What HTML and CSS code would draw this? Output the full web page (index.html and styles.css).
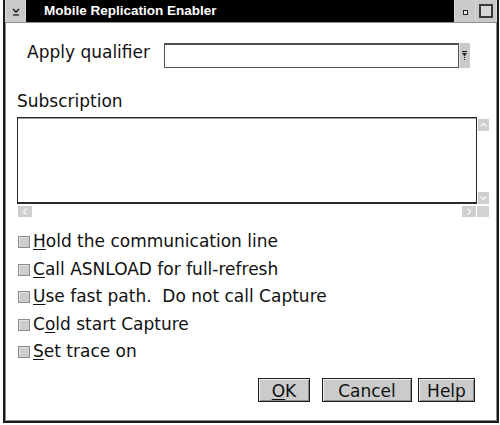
FILE: index.html
```html
<!DOCTYPE html>
<html>
<head>
<meta charset="utf-8">
<link rel="stylesheet" href="styles.css">
</head>
<body>
<div class="window">
  <div class="titlebar">
    <div class="tb-btn sys">
      <svg width="19" height="22" viewBox="0 0 19 22"><polyline points="7,9 10,12 13,9" fill="none" stroke="#111" stroke-width="1.3"/><line x1="7" y1="15" x2="13" y2="15" stroke="#111" stroke-width="1.2"/></svg>
    </div>
    <div class="title">Mobile Replication Enabler</div>
    <div class="tb-btn min"><span class="min-glyph"></span></div>
    <div class="tb-btn max"><span class="max-glyph"></span></div>
  </div>
  <div class="content">
    <div class="apply-row">
      <div class="apply-label">Apply qualifier</div>
      <div class="combo">
        <div class="combo-field"></div>
        <div class="combo-btn">
          <svg width="5" height="9" viewBox="0 0 5 9"><rect x="0" y="0" width="5" height="1" fill="#222"/><polygon points="0,2 5,2 2.5,5.5" fill="#222"/><rect x="2" y="6" width="1" height="1" fill="#222"/><rect x="2" y="8" width="1" height="1" fill="#222"/></svg>
        </div>
      </div>
    </div>
    <div class="section-label">Subscription</div>
    <div class="listbox">
      <div class="textarea"></div>
      <div class="vscroll">
        <div class="sbtn v"><svg width="11" height="12" viewBox="0 0 11 12"><polyline points="2.5,7.5 5.5,4.5 8.5,7.5" fill="none" stroke="#f4f4f4" stroke-width="1.5"/></svg></div>
        <div class="sbtn v"><svg width="11" height="12" viewBox="0 0 11 12"><polyline points="2.5,4.5 5.5,7.5 8.5,4.5" fill="none" stroke="#f4f4f4" stroke-width="1.5"/></svg></div>
      </div>
      <div class="hscroll">
        <div class="sbtn h"><svg width="14" height="11" viewBox="0 0 14 11"><polyline points="8.5,2.5 5.5,5.5 8.5,8.5" fill="none" stroke="#f4f4f4" stroke-width="1.5"/></svg></div>
        <div class="sbtn h"><svg width="14" height="11" viewBox="0 0 14 11"><polyline points="5.5,2.5 8.5,5.5 5.5,8.5" fill="none" stroke="#f4f4f4" stroke-width="1.5"/></svg></div>
      </div>
      <div class="corner"></div>
    </div>
    <div class="checks">
      <div class="check"><span class="box"></span><span><span class="mn">H</span>old the communication line</span></div>
      <div class="check"><span class="box"></span><span><span class="mn">C</span>all ASNLOAD for full-refresh</span></div>
      <div class="check"><span class="box"></span><span><span class="mn">U</span>se fast path.&nbsp; Do not call Capture</span></div>
      <div class="check"><span class="box"></span><span>C<span class="mn">o</span>ld start Capture</span></div>
      <div class="check"><span class="box"></span><span><span class="mn">S</span>et trace on</span></div>
    </div>
    <div class="buttons">
      <div class="btn ok"><span class="mn">O</span>K</div>
      <div class="btn cancel">Cancel</div>
      <div class="btn help">Help</div>
    </div>
  </div>
</div>
</body>
</html>
```
FILE: styles.css
```css
html, body {
  margin: 0;
  padding: 0;
  background: #ffffff;
}
body {
  font-family: "DejaVu Sans", sans-serif;
  font-size: 17px;
  color: #111;
}
.window {
  margin-left: 3px;
  width: 496px;
  height: 423px;
  box-sizing: border-box;
  border: 2px solid #1a1a1a;
  border-top: 0;
  box-shadow: inset 1px 0 0 #8a8a8a, inset -1px 0 0 #8a8a8a, inset 0 -1px 0 #8a8a8a;
  background: #fff;
}
.titlebar {
  display: flex;
  height: 22px;
  background: #d8d8d8;
  border-bottom: 1px solid #8e8e8e;
  padding-left: 1px;
  padding-right: 1px;
  gap: 1px;
}
.tb-btn {
  background: #c9c9c9;
  display: flex;
  align-items: center;
  justify-content: center;
}
.sys {
  width: 19px;
  display: block;
}
.sys svg { display: block; }
.title {
  flex: 1;
  background: #000;
  color: #fff;
  font-family: "Liberation Sans", Arial, sans-serif;
  font-weight: bold;
  font-size: 13.5px;
  line-height: 22px;
  padding-left: 18px;
  white-space: nowrap;
}
.min, .max { width: 20px; }
.min-glyph {
  width: 5px;
  height: 5px;
  box-sizing: border-box;
  border: 1px solid #222;
  background: #e8e8e8;
  margin-top: 3px;
}
.max-glyph {
  width: 14px;
  height: 14px;
  box-sizing: border-box;
  border: 2px solid #3a3a3a;
  background: #d6d6d6;
}
.content {
  padding-left: 12px;
}
.apply-row {
  display: grid;
  grid-template-columns: 147px 306px;
  align-items: start;
  margin-top: 19px;
}
.apply-label {
  padding-left: 10px;
  line-height: 20px;
}
.combo {
  display: flex;
  height: 25px;
  margin-top: 1px;
}
.combo-field {
  width: 295px;
  box-sizing: border-box;
  border: 1px solid #505050;
  border-top: 2px solid #505050;
  background: #fff;
}
.combo-btn {
  width: 11px;
  background: #c9c9c9;
  box-shadow: inset 1px 0 0 #e6e6e6;
  display: flex;
  align-items: center;
  justify-content: center;
}
.combo-btn svg { display: block; }
.section-label {
  margin-top: 23px;
  line-height: 20px;
}
.listbox {
  margin-top: 6px;
  display: grid;
  grid-template-columns: 460px 13px;
  grid-template-rows: 87px 11px;
  row-gap: 2px;
}
.textarea {
  box-sizing: border-box;
  border: 1px solid #2a2a2a;
  border-bottom-width: 2px;
  box-shadow: inset 0 1px 0 #9a9a9a;
  background: #fff;
}
.vscroll {
  display: flex;
  flex-direction: column;
  justify-content: space-between;
  padding-top: 2px;
  padding-left: 1px;
}
.hscroll {
  display: flex;
  justify-content: space-between;
  padding-left: 1px;
  padding-right: 1px;
}
.sbtn {
  background: #cfcfcf;
  display: flex;
  align-items: center;
  justify-content: center;
}
.sbtn svg { display: block; }
.sbtn.v { width: 11px; height: 12px; }
.sbtn.h { width: 14px; height: 11px; }
.corner {
  background: #d3d3d3;
  width: 12px;
}
.checks {
  margin-top: 11px;
  padding-left: 1px;
}
.check {
  line-height: 27.5px;
  height: 27.5px;
  white-space: nowrap;
}
.box {
  display: inline-block;
  width: 12px;
  height: 12px;
  box-sizing: border-box;
  border: 1px solid #8a8a8a;
  background: #cdcdcd;
  box-shadow: inset 1px 1px 0 #e2e2e2;
  margin-right: 3px;
  margin-bottom: -1px;
}
.mn {
  text-decoration: underline;
  text-underline-offset: 2px;
  text-decoration-thickness: 1px;
}
.buttons {
  display: flex;
  justify-content: flex-end;
  margin-top: 12.5px;
  padding-right: 22px;
}
.btn {
  height: 24px;
  box-sizing: border-box;
  border: 1px solid #1e1e1e;
  background: #cbcbcb;
  box-shadow: inset 1px 1px 0 #f0f0f0, inset -1px -1px 0 #8c8c8c;
  text-align: center;
  line-height: 20px;
  padding-top: 2px;
}
.ok { width: 52px; margin-right: 12px; }
.cancel { width: 90px; margin-right: 6px; }
.help { width: 57px; }
```
